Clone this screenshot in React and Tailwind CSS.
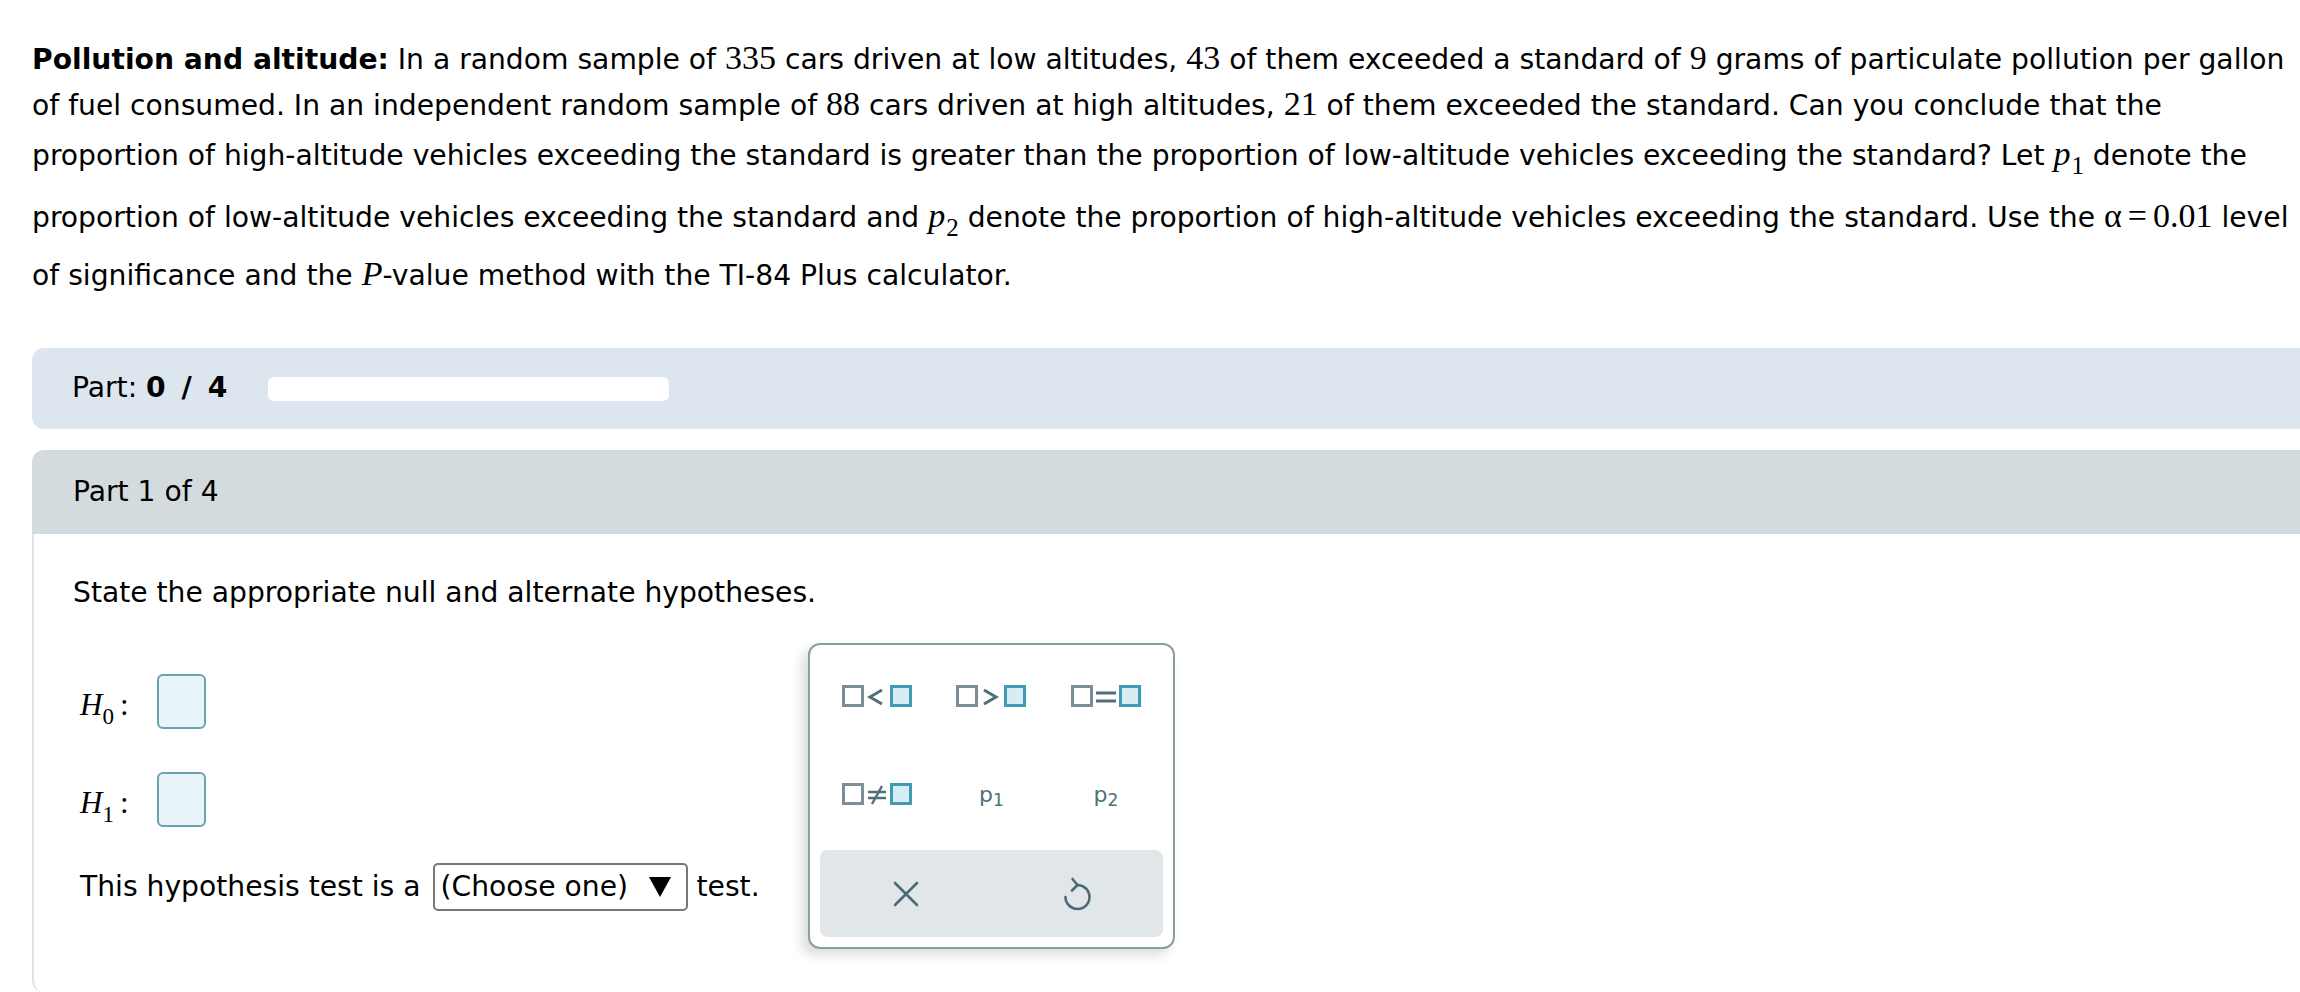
const serif = "font-['Liberation_Serif','Times_New_Roman',serif]";

function M({ children }) {
  return <span className={"font-['Liberation_Serif','Times_New_Roman',serif] text-[34px] leading-none"}>{children}</span>;
}

function PSub({ n }) {
  return (
    <span className="font-['Liberation_Serif','Times_New_Roman',serif] text-[34px] leading-none">
      <i>p</i>
      <span className="relative top-[9px] text-[25px] leading-none ml-[1px]">{n}</span>
    </span>
  );
}

function Sq({ x, teal }) {
  return teal ? (
    <rect x={x + 1.5} y="1.5" width="19" height="19" fill="#d5edf3" stroke="#3f9bb6" strokeWidth="3" />
  ) : (
    <rect x={x + 1.5} y="1.5" width="19" height="19" fill="#ffffff" stroke="#7b8f99" strokeWidth="3" />
  );
}

function RelIcon({ op }) {
  return (
    <svg width="72" height="24" viewBox="0 0 72 24">
      <Sq x={1} />
      {op === "<" && <polyline points="41,5 29,12 41,19" fill="none" stroke="#4f6f7b" strokeWidth="3" />}
      {op === ">" && <polyline points="29,5 41,12 29,19" fill="none" stroke="#4f6f7b" strokeWidth="3" />}
      {op === "=" && (
        <g stroke="#4f6f7b" strokeWidth="3">
          <line x1="26" y1="8" x2="46" y2="8" />
          <line x1="26" y1="16" x2="46" y2="16" />
        </g>
      )}
      {op === "ne" && (
        <g stroke="#4f6f7b" strokeWidth="2.5">
          <line x1="27" y1="9" x2="45" y2="9" />
          <line x1="27" y1="15" x2="45" y2="15" />
          <line x1="41" y1="3" x2="31" y2="21" />
        </g>
      )}
      <Sq x={49} teal />
    </svg>
  );
}

function PBtn({ n }) {
  return (
    <span className="font-['DejaVu_Sans',sans-serif] text-[#4f6f7b] text-[22px] leading-none">
      p<span className="relative top-[4px] text-[17px]">{n}</span>
    </span>
  );
}

function AnswerBox() {
  return <div className="w-[49px] h-[55px] border-2 border-[#6aa2ae] bg-[#e8f4f8] rounded-[6px]" />;
}

function HLabel({ n }) {
  return (
    <div className="w-[77px] flex items-center">
      <span className={serif + " text-[31px] leading-none relative top-[3px]"}>
        <i>H</i>
        <span className="relative top-[9px] text-[23px]">{n}</span>
        <span className="ml-[6px]">:</span>
      </span>
    </div>
  );
}

export default function App() {
  return (
    <div className="w-[2300px] h-[992px] overflow-hidden bg-white text-black font-['DejaVu_Sans','Verdana',sans-serif]">
      <div className="pl-[32px] pt-[37px] text-[28.2px] leading-[46px] whitespace-nowrap">
        <div className="h-[46px]">
          <b>Pollution and altitude:</b> In a random sample of <M>335</M> cars driven at low altitudes, <M>43</M> of them exceeded a standard of <M>9</M> grams of particulate pollution per gallon
        </div>
        <div className="h-[50px]">
          of fuel consumed. In an independent random sample of <M>88</M> cars driven at high altitudes, <M>21</M> of them exceeded the standard. Can you conclude that the
        </div>
        <div className="h-[62px]">
          proportion of high-altitude vehicles exceeding the standard is greater than the proportion of low-altitude vehicles exceeding the standard? Let <PSub n="1" /> denote the
        </div>
        <div className="h-[58px]">
          proportion of low-altitude vehicles exceeding the standard and <PSub n="2" /> denote the proportion of high-altitude vehicles exceeding the standard. Use the{" "}
          <M>
            α<span className="mx-[6px]">=</span>0.01
          </M>{" "}
          level
        </div>
        <div className="h-[44px]">
          of significance and the <M><i>P</i></M>-value method with the TI-84 Plus calculator.
        </div>
      </div>

      <div className="ml-[32px] mt-[51px] h-[81px] bg-[#dde6ef] rounded-l-[12px] flex items-center pl-[40px] text-[28.2px]">
        <span className="w-[196px]">
          Part: <b className="[word-spacing:6px]">0 / 4</b>
        </span>
        <div className="w-[401px] h-[24px] bg-white rounded-[6px]" />
      </div>

      <div className="ml-[32px] mt-[21px]">
        <div className="h-[84px] bg-[#d3dbde] rounded-tl-[12px] flex items-center pl-[41px] text-[28.2px]">Part 1 of 4</div>
        <div className="border-l-2 border-[#dde3e6] h-[458px] rounded-bl-[12px] pl-[39px] pt-[41px] text-[28.2px]">
          <div className="h-[36px] leading-[36px]">State the appropriate null and alternate hypotheses.</div>
          <div className="mt-[32px] flex">
            <div className="ml-[7px] w-[728px] pt-[31px]">
              <div className="h-[55px] flex items-center">
                <HLabel n="0" />
                <AnswerBox />
              </div>
              <div className="mt-[43px] h-[55px] flex items-center">
                <HLabel n="1" />
                <AnswerBox />
              </div>
              <div className="mt-[36px] h-[48px] flex items-center">
                <span>This hypothesis test is a</span>
                <div className="ml-[12px] w-[255px] h-[48px] border-2 border-[#777777] rounded-[5px] flex items-center pl-[6px] pr-[15px] justify-between">
                  <span>(Choose one)</span>
                  <svg width="22" height="20" viewBox="0 0 22 20">
                    <polygon points="0,0 22,0 11,20" fill="#000000" />
                  </svg>
                </div>
                <span className="ml-[9px]">test.</span>
              </div>
            </div>
            <div className="w-[367px] h-[306px] border-2 border-[#8a9ca5] rounded-[12px] bg-white p-[10px] shadow-[-6px_6px_12px_rgba(0,0,0,0.14)]">
              <div className="grid grid-cols-3 h-[84px] items-center justify-items-center">
                <RelIcon op="<" />
                <RelIcon op=">" />
                <RelIcon op="=" />
              </div>
              <div className="grid grid-cols-3 h-[84px] mt-[14px] items-center justify-items-center">
                <RelIcon op="ne" />
                <PBtn n="1" />
                <PBtn n="2" />
              </div>
              <div className="mt-[13px] h-[87px] bg-[#e1e6e8] rounded-[8px] grid grid-cols-2 items-center justify-items-center">
                <svg width="26" height="26" viewBox="0 0 26 26">
                  <g stroke="#4a6a77" strokeWidth="2.6" strokeLinecap="round">
                    <line x1="2" y1="2" x2="24" y2="24" />
                    <line x1="24" y1="2" x2="2" y2="24" />
                  </g>
                </svg>
                <svg width="30" height="36" viewBox="0 0 30 36">
                  <g fill="none" stroke="#4a6a77" strokeWidth="2.6" strokeLinecap="round" strokeLinejoin="round">
                    <path d="M3.5 21 A12 12 0 1 0 15 9" />
                    <polyline points="10.5,3 15.5,9 10,14.5" />
                  </g>
                </svg>
              </div>
            </div>
          </div>
        </div>
      </div>
    </div>
  );
}
